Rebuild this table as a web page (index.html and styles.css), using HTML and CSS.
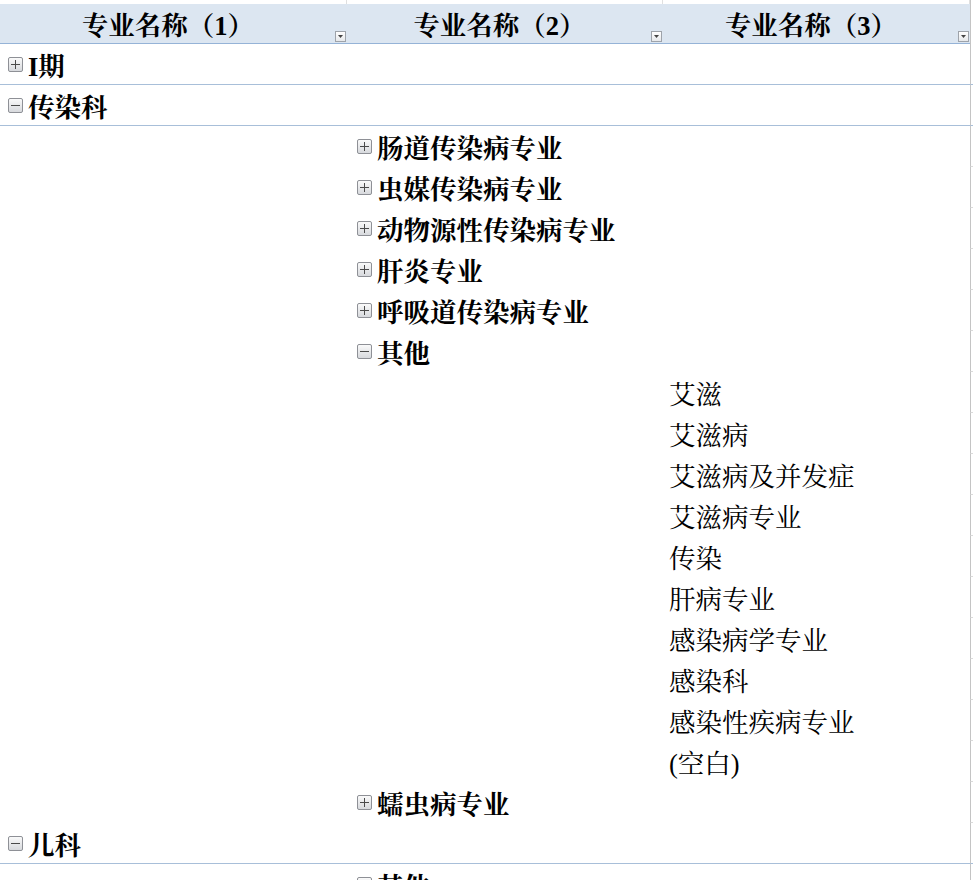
FILE: index.html
```html
<!DOCTYPE html>
<html lang="zh-CN">
<head>
<meta charset="utf-8">
<title>专业名称透视表</title>
<link rel="stylesheet" href="styles.css">
</head>
<body>
<div class="sheet">
  <div class="row strip"><div class="c"></div><div class="c"></div><div class="c"></div><div class="edge"></div></div>

  <div class="row head">
    <div class="c h"><span class="ht">专业名称（1）</span><span class="dd"><svg width="5" height="3" viewBox="0 0 5 3"><path d="M0 0h5L2.5 3z" fill="#444"/></svg></span></div>
    <div class="c h"><span class="ht">专业名称（2）</span><span class="dd"><svg width="5" height="3" viewBox="0 0 5 3"><path d="M0 0h5L2.5 3z" fill="#444"/></svg></span></div>
    <div class="c h"><span class="ht">专业名称（3）</span><span class="dd"><svg width="5" height="3" viewBox="0 0 5 3"><path d="M0 0h5L2.5 3z" fill="#444"/></svg></span></div>
    <div class="edge"></div>
  </div>

  <div class="row l1">
    <div class="c lv1"><svg class="tog" viewBox="0 0 15 15"><use href="#plus"/></svg><span>I期</span></div>
    <div class="c"></div><div class="c"></div><div class="edge"></div>
  </div>
  <div class="row l1">
    <div class="c lv1"><svg class="tog" viewBox="0 0 15 15"><use href="#minus"/></svg><span>传染科</span></div>
    <div class="c"></div><div class="c"></div><div class="edge"></div>
  </div>

  <div class="row"><div class="c"></div><div class="c lv2"><svg class="tog" viewBox="0 0 15 15"><use href="#plus"/></svg><span>肠道传染病专业</span></div><div class="c"></div><div class="edge"></div></div>
  <div class="row"><div class="c"></div><div class="c lv2"><svg class="tog" viewBox="0 0 15 15"><use href="#plus"/></svg><span>虫媒传染病专业</span></div><div class="c"></div><div class="edge"></div></div>
  <div class="row"><div class="c"></div><div class="c lv2"><svg class="tog" viewBox="0 0 15 15"><use href="#plus"/></svg><span>动物源性传染病专业</span></div><div class="c"></div><div class="edge"></div></div>
  <div class="row"><div class="c"></div><div class="c lv2"><svg class="tog" viewBox="0 0 15 15"><use href="#plus"/></svg><span>肝炎专业</span></div><div class="c"></div><div class="edge"></div></div>
  <div class="row"><div class="c"></div><div class="c lv2"><svg class="tog" viewBox="0 0 15 15"><use href="#plus"/></svg><span>呼吸道传染病专业</span></div><div class="c"></div><div class="edge"></div></div>
  <div class="row"><div class="c"></div><div class="c lv2"><svg class="tog" viewBox="0 0 15 15"><use href="#minus"/></svg><span>其他</span></div><div class="c"></div><div class="edge"></div></div>

  <div class="row"><div class="c"></div><div class="c"></div><div class="c lv3">艾滋</div><div class="edge"></div></div>
  <div class="row"><div class="c"></div><div class="c"></div><div class="c lv3">艾滋病</div><div class="edge"></div></div>
  <div class="row"><div class="c"></div><div class="c"></div><div class="c lv3">艾滋病及并发症</div><div class="edge"></div></div>
  <div class="row"><div class="c"></div><div class="c"></div><div class="c lv3">艾滋病专业</div><div class="edge"></div></div>
  <div class="row"><div class="c"></div><div class="c"></div><div class="c lv3">传染</div><div class="edge"></div></div>
  <div class="row"><div class="c"></div><div class="c"></div><div class="c lv3">肝病专业</div><div class="edge"></div></div>
  <div class="row"><div class="c"></div><div class="c"></div><div class="c lv3">感染病学专业</div><div class="edge"></div></div>
  <div class="row"><div class="c"></div><div class="c"></div><div class="c lv3">感染科</div><div class="edge"></div></div>
  <div class="row"><div class="c"></div><div class="c"></div><div class="c lv3">感染性疾病专业</div><div class="edge"></div></div>
  <div class="row"><div class="c"></div><div class="c"></div><div class="c lv3">(空白)</div><div class="edge"></div></div>

  <div class="row"><div class="c"></div><div class="c lv2"><svg class="tog" viewBox="0 0 15 15"><use href="#plus"/></svg><span>蠕虫病专业</span></div><div class="c"></div><div class="edge"></div></div>

  <div class="row l1">
    <div class="c lv1"><svg class="tog" viewBox="0 0 15 15"><use href="#minus"/></svg><span>儿科</span></div>
    <div class="c"></div><div class="c"></div><div class="edge"></div>
  </div>
  <div class="row"><div class="c"></div><div class="c lv2"><svg class="tog" viewBox="0 0 15 15"><use href="#minus"/></svg><span>其他</span></div><div class="c"></div><div class="edge"></div></div>
</div>

<svg class="defs" width="0" height="0" aria-hidden="true">
  <defs>
    <linearGradient id="tg" x1="0" y1="0" x2="0" y2="1">
      <stop offset="0" stop-color="#fbfbfb"/>
      <stop offset="1" stop-color="#d6d8dc"/>
    </linearGradient>
    <g id="plus">
      <rect x="0.5" y="0.5" width="14" height="14" rx="1.5" fill="url(#tg)" stroke="#8e9096"/>
      <path d="M3 7.5h9M7.5 3v9" stroke="#4a4a4a" stroke-width="1"/>
    </g>
    <g id="minus">
      <rect x="0.5" y="0.5" width="14" height="14" rx="1.5" fill="url(#tg)" stroke="#8e9096"/>
      <path d="M3 7.5h9" stroke="#4a4a4a" stroke-width="1"/>
    </g>
  </defs>
</svg>
</body>
</html>
```

FILE: styles.css
```css
html, body {
  margin: 0;
  padding: 0;
  background: #ffffff;
}

body {
  font-family: "Liberation Serif", "Noto Serif CJK SC", "Noto Sans CJK SC", serif;
  color: #000000;
  overflow: hidden;
}

.sheet {
  width: 973px;
}

.row {
  display: grid;
  grid-template-columns: 347px 316px 307px 3px;
  height: 41px;
  box-sizing: border-box;
}

.c {
  display: flex;
  align-items: center;
  box-sizing: border-box;
  min-width: 0;
  white-space: nowrap;
}

.edge {
  border-left: 1px solid #c4c4c4;
  border-bottom: 1px solid #dadada;
  box-sizing: border-box;
}

.strip {
  height: 4px;
}

.strip .c {
  border-right: 1px solid #e0e0e0;
}

.strip .edge {
  border-bottom: none;
}

.head {
  height: 40px;
}

.head .edge {
  border-bottom: none;
}

.h {
  position: relative;
  justify-content: center;
  padding-right: 11px;
  background: #dce6f1;
  border-bottom: 1px solid #95b3d7;
  font-size: 26.5px;
  font-weight: bold;
}

.dd {
  position: absolute;
  right: 1px;
  bottom: 1px;
  width: 11px;
  height: 11px;
  box-sizing: border-box;
  border: 1px solid #9ea3aa;
  background: linear-gradient(#ffffff, #e6e8eb);
  display: flex;
  align-items: center;
  justify-content: center;
}

.dd svg {
  display: block;
}

.l1 .c {
  border-bottom: 1px solid #a8bfd9;
}

.l1 .edge {
  border-bottom: 1px solid #a8bfd9;
}

.lv1,
.lv2 {
  font-size: 26.5px;
  font-weight: bold;
  gap: 5px;
}

.lv1 {
  padding-left: 8px;
}

.lv2 {
  padding-left: 10px;
}

.lv3 {
  font-size: 26.5px;
  font-weight: normal;
  padding-left: 6px;
}

.tog {
  width: 15px;
  height: 15px;
  flex: none;
  display: block;
}

.defs {
  position: absolute;
  width: 0;
  height: 0;
  overflow: hidden;
}
```
